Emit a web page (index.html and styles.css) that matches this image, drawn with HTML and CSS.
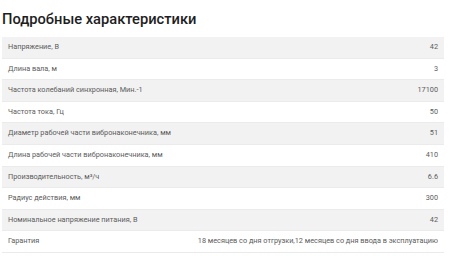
FILE: index.html
```html
<!DOCTYPE html>
<html lang="ru">
<head>
<meta charset="utf-8">
<link rel="stylesheet" href="styles.css">
</head>
<body>
<div class="page">
  <h2 class="title">Подробные характеристики</h2>
  <table class="specs">
    <tr><td>Напряжение, В</td><td class="val">42</td></tr>
    <tr><td>Длина вала, м</td><td class="val">3</td></tr>
    <tr><td>Частота колебаний синхронная, Мин.-1</td><td class="val">17100</td></tr>
    <tr><td>Частота тока, Гц</td><td class="val">50</td></tr>
    <tr><td>Диаметр рабочей части вибронаконечника, мм</td><td class="val">51</td></tr>
    <tr><td>Длина рабочей части вибронаконечника, мм</td><td class="val">410</td></tr>
    <tr><td>Производительность, м³/ч</td><td class="val">6.6</td></tr>
    <tr><td>Радиус действия, мм</td><td class="val">300</td></tr>
    <tr><td>Номинальное напряжение питания, В</td><td class="val">42</td></tr>
    <tr><td>Гарантия</td><td class="val">18 месяцев со дня отгрузки,12 месяцев со дня ввода в эксплуатацию</td></tr>
  </table>
</div>
</body>
</html>
```
FILE: styles.css
```css
html, body {
  margin: 0;
  padding: 0;
  background: #fff;
}
.page {
  padding: 0 6px 0 2px;
  font-family: Roboto, "Liberation Sans", sans-serif;
}
.title {
  margin: 0;
  padding-top: 10px;
  height: 27px;
  font-size: 14.7px;
  font-weight: 500;
  line-height: 18px;
  color: #1e1e1e;
}
.specs {
  width: 100%;
  border-collapse: collapse;
  font-size: 7.3px;
  color: #5c5c5c;
}
.specs td {
  padding: 5px 6px;
  line-height: 10.6px;
  border-bottom: 1px solid #ebebeb;
  white-space: nowrap;
}
.specs tr:nth-child(odd) td {
  background: #f2f2f2;
}
.specs .val {
  text-align: right;
}
```
